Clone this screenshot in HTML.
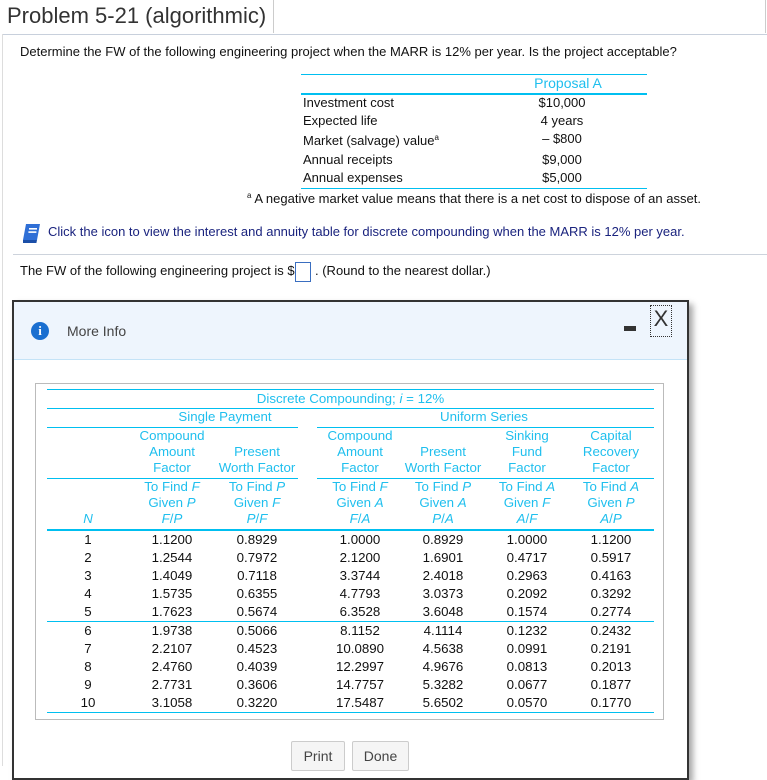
<!DOCTYPE html>
<html><head><meta charset="utf-8"><style>
*{margin:0;padding:0;box-sizing:border-box}
body{width:767px;height:766px;overflow:hidden;background:#fff;position:relative;font-family:"Liberation Sans",sans-serif;font-size:13px;color:#111}
.a{position:absolute;white-space:nowrap;line-height:16px}
.c{text-align:center}
.h{position:absolute;background:#00bff0}
.cy{color:#1fbfee}
.t{position:absolute;width:90px;text-align:center;line-height:16px;white-space:nowrap;font-size:13.3px}
sup{font-size:8px;line-height:0;vertical-align:5px}
</style></head><body>
<div class="a" style="left:7px;top:3px;font-size:22px;line-height:26px;color:#333">Problem 5-21 (algorithmic)</div>
<div style="position:absolute;left:273px;top:0;width:1px;height:33px;background:#ccc"></div>
<div style="position:absolute;left:2px;top:34px;width:765px;height:1px;background:#c8d0dc"></div>
<div style="position:absolute;left:2px;top:34px;width:1px;height:732px;background:#ddd"></div>
<div style="position:absolute;left:765px;top:0;width:1px;height:33px;background:#ccc"></div>
<div class="a" style="left:20px;top:44px">Determine the FW of the following engineering project when the MARR is 12% per year. Is the project acceptable?</div>
<div class="h" style="left:301px;top:74px;width:346px;height:1px"></div>
<div class="a cy c" style="left:518px;top:75px;width:100px;font-size:14px">Proposal A</div>
<div class="h" style="left:301px;top:93px;width:346px;height:2px"></div>
<div class="a" style="left:303px;top:95px">Investment cost</div><div class="a c" style="left:522px;top:95px;width:80px">$10,000</div>
<div class="a" style="left:303px;top:113px">Expected life</div><div class="a c" style="left:522px;top:113px;width:80px">4 years</div>
<div class="a" style="left:303px;top:133px">Market (salvage) value<sup>a</sup></div><div class="a c" style="left:522px;top:131px;width:80px">– $800</div>
<div class="a" style="left:303px;top:152px">Annual receipts</div><div class="a c" style="left:522px;top:152px;width:80px">$9,000</div>
<div class="a" style="left:303px;top:170px">Annual expenses</div><div class="a c" style="left:522px;top:170px;width:80px">$5,000</div>
<div class="h" style="left:301px;top:188px;width:346px;height:1px"></div>
<div class="a" style="left:247px;top:191px"><sup>a</sup> A negative market value means that there is a net cost to dispose of an asset.</div>
<svg style="position:absolute;left:21px;top:223px" width="20" height="21" viewBox="0 0 20 21"><path d="M5 1h14l-3 16H2z" fill="#2f6fd6"/><path d="M2 17h14l-0.6 3H2z" fill="#1b4fa8"/><rect x="8" y="5" width="8" height="1.6" fill="#fff"/><rect x="7.4" y="8.3" width="8" height="1.6" fill="#fff"/></svg>
<div class="a" style="left:48px;top:224px;color:#1a237e">Click the icon to view the interest and annuity table for discrete compounding when the MARR is 12% per year.</div>
<div style="position:absolute;left:13px;top:254px;width:754px;height:1px;background:#cdd3dc"></div>
<div class="a" style="left:20px;top:263px">The FW of the following engineering project is $</div>
<div style="position:absolute;left:295px;top:262px;width:16px;height:20px;border:1px solid #3a6ec0"></div>
<div class="a" style="left:315px;top:263px">. (Round to the nearest dollar.)</div>
<!-- modal -->
<div style="position:absolute;left:12px;top:300px;width:677px;height:480px;border:2px solid #333;background:#fff;box-shadow:4px 4px 6px rgba(0,0,0,.35)"></div>
<div style="position:absolute;left:14px;top:302px;width:673px;height:58px;background:#eef5fd;border-bottom:1px solid #c4e3f7"></div>
<div style="position:absolute;left:31px;top:322px;width:18px;height:18px;border-radius:50%;background:#1a6fd0;color:#fff;font:bold 13px 'Liberation Serif',serif;text-align:center;line-height:18px">i</div>
<div class="a" style="left:67px;top:323px;color:#444;font-size:14px">More Info</div>
<div style="position:absolute;left:624px;top:326px;width:12px;height:5px;background:#333"></div>
<div style="position:absolute;left:650px;top:305px;width:22px;height:32px;border:1px dotted #333;font:22px 'Liberation Sans',sans-serif;text-align:center;line-height:26px;color:#333">X</div>
<div style="position:absolute;left:35px;top:383px;width:629px;height:337px;border:1px solid #bbb"></div>
<div class="h" style="left:47px;top:389px;width:607px;height:1px"></div>
<div class="a cy c" style="left:47px;top:391px;width:607px;font-size:13.3px">Discrete Compounding; <i>i</i> = 12%</div>
<div class="h" style="left:47px;top:408px;width:607px;height:1px"></div>
<div class="a cy c" style="left:165px;top:409px;width:120px;font-size:13.3px">Single Payment</div>
<div class="a cy c" style="left:424px;top:409px;width:120px;font-size:13.3px">Uniform Series</div>
<div class="h" style="left:47px;top:427px;width:251px;height:1px"></div>
<div class="h" style="left:317px;top:427px;width:337px;height:1px"></div>
<div class="t cy" style="left:127px;top:428px">Compound<br>Amount<br>Factor</div>
<div class="t cy" style="left:212px;top:444px">Present<br>Worth Factor</div>
<div class="t cy" style="left:315px;top:428px">Compound<br>Amount<br>Factor</div>
<div class="t cy" style="left:398px;top:444px">Present<br>Worth Factor</div>
<div class="t cy" style="left:482px;top:428px">Sinking<br>Fund<br>Factor</div>
<div class="t cy" style="left:566px;top:428px">Capital<br>Recovery<br>Factor</div>
<div class="h" style="left:47px;top:478px;width:251px;height:1px"></div>
<div class="h" style="left:317px;top:478px;width:337px;height:1px"></div>
<div class="t cy" style="left:43px;top:511px"><i>N</i></div>
<div class="t cy" style="left:127px;top:479px">To Find <i>F</i><br>Given <i>P</i><br><i>F</i>/<i>P</i></div>
<div class="t cy" style="left:212px;top:479px">To Find <i>P</i><br>Given <i>F</i><br><i>P</i>/<i>F</i></div>
<div class="t cy" style="left:315px;top:479px">To Find <i>F</i><br>Given <i>A</i><br><i>F</i>/<i>A</i></div>
<div class="t cy" style="left:398px;top:479px">To Find <i>P</i><br>Given <i>A</i><br><i>P</i>/<i>A</i></div>
<div class="t cy" style="left:482px;top:479px">To Find <i>A</i><br>Given <i>F</i><br><i>A</i>/<i>F</i></div>
<div class="t cy" style="left:566px;top:479px">To Find <i>A</i><br>Given <i>P</i><br><i>A</i>/<i>P</i></div>
<div class="h" style="left:47px;top:529px;width:607px;height:2px"></div>
<div class="t" style="left:43px;top:531px;line-height:18px">1<br>2<br>3<br>4<br>5</div>
<div class="t" style="left:127px;top:531px;line-height:18px">1.1200<br>1.2544<br>1.4049<br>1.5735<br>1.7623</div>
<div class="t" style="left:212px;top:531px;line-height:18px">0.8929<br>0.7972<br>0.7118<br>0.6355<br>0.5674</div>
<div class="t" style="left:315px;top:531px;line-height:18px">1.0000<br>2.1200<br>3.3744<br>4.7793<br>6.3528</div>
<div class="t" style="left:398px;top:531px;line-height:18px">0.8929<br>1.6901<br>2.4018<br>3.0373<br>3.6048</div>
<div class="t" style="left:482px;top:531px;line-height:18px">1.0000<br>0.4717<br>0.2963<br>0.2092<br>0.1574</div>
<div class="t" style="left:566px;top:531px;line-height:18px">1.1200<br>0.5917<br>0.4163<br>0.3292<br>0.2774</div>
<div class="h" style="left:47px;top:621px;width:607px;height:1px"></div>
<div class="t" style="left:43px;top:622px;line-height:18px">6<br>7<br>8<br>9<br>10</div>
<div class="t" style="left:127px;top:622px;line-height:18px">1.9738<br>2.2107<br>2.4760<br>2.7731<br>3.1058</div>
<div class="t" style="left:212px;top:622px;line-height:18px">0.5066<br>0.4523<br>0.4039<br>0.3606<br>0.3220</div>
<div class="t" style="left:315px;top:622px;line-height:18px">8.1152<br>10.0890<br>12.2997<br>14.7757<br>17.5487</div>
<div class="t" style="left:398px;top:622px;line-height:18px">4.1114<br>4.5638<br>4.9676<br>5.3282<br>5.6502</div>
<div class="t" style="left:482px;top:622px;line-height:18px">0.1232<br>0.0991<br>0.0813<br>0.0677<br>0.0570</div>
<div class="t" style="left:566px;top:622px;line-height:18px">0.2432<br>0.2191<br>0.2013<br>0.1877<br>0.1770</div>
<div class="h" style="left:47px;top:712px;width:607px;height:1px"></div>
<div style="position:absolute;left:291px;top:741px;width:54px;height:30px;border:1px solid #ccc;border-radius:2px;background:#f5f5f5;color:#444;font-size:14px;text-align:center;line-height:28px">Print</div>
<div style="position:absolute;left:352px;top:741px;width:57px;height:30px;border:1px solid #ccc;border-radius:2px;background:#f5f5f5;color:#444;font-size:14px;text-align:center;line-height:28px">Done</div>
</body></html>
